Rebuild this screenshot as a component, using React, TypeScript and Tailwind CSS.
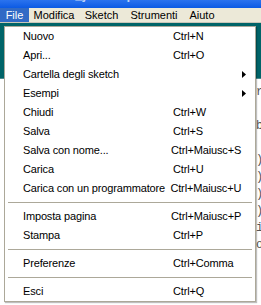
import React from 'react';

type Item =
  | { kind: 'item'; label: string; shortcut?: string; submenu?: boolean }
  | { kind: 'sep' };

const items: Item[] = [
  { kind: 'item', label: 'Nuovo', shortcut: 'Ctrl+N' },
  { kind: 'item', label: 'Apri...', shortcut: 'Ctrl+O' },
  { kind: 'item', label: 'Cartella degli sketch', submenu: true },
  { kind: 'item', label: 'Esempi', submenu: true },
  { kind: 'item', label: 'Chiudi', shortcut: 'Ctrl+W' },
  { kind: 'item', label: 'Salva', shortcut: 'Ctrl+S' },
  { kind: 'item', label: 'Salva con nome...', shortcut: 'Ctrl+Maiusc+S' },
  { kind: 'item', label: 'Carica', shortcut: 'Ctrl+U' },
  { kind: 'item', label: 'Carica con un programmatore', shortcut: 'Ctrl+Maiusc+U' },
  { kind: 'sep' },
  { kind: 'item', label: 'Imposta pagina', shortcut: 'Ctrl+Maiusc+P' },
  { kind: 'item', label: 'Stampa', shortcut: 'Ctrl+P' },
  { kind: 'sep' },
  { kind: 'item', label: 'Preferenze', shortcut: 'Ctrl+Comma' },
  { kind: 'sep' },
  { kind: 'item', label: 'Esci', shortcut: 'Ctrl+Q' },
];

const menus = [
  { label: 'File', w: 'w-[29px]', active: true },
  { label: 'Modifica', w: 'w-[50px]' },
  { label: 'Sketch', w: 'w-[45px]' },
  { label: 'Strumenti', w: 'w-[60px]' },
  { label: 'Aiuto', w: 'w-[36px]' },
];

const code = [
  '// LiquidCrystal Library - Hello World',
  ' The circuit:',
  ' * LCD RS pin to digital pin 12 enable',
  ' * LCD Enable pin to digital pin 11 data',
  ' * LCD D4 pin to digital pin 5 (LCD)',
  ' * LCD D5 pin to digital pin 4 (LCD)',
  ' * LCD D6 pin to digital pin 3 (LCD)',
  ' * LCD D7 pin to digital pin 2 (LCD)',
  ' * LCD R/W pin to ground and then pin',
  ' * 10K resistor: ends to +5V and ground',
  ' * wiper to LCD VO pin (pin 3) Data',
  ' */',
  '  Pin Digital 11 -> Pin 06 data LCD',
];

function Arrow() {
  return (
    <svg width="4" height="7" viewBox="0 0 4 7" className="block">
      <polygon points="0,0 4,3.5 0,7" fill="#000" />
    </svg>
  );
}

export default function App() {
  return (
    <div
      className="relative w-[261px] h-[305px] overflow-hidden bg-white text-[11px] text-black"
      style={{ fontFamily: '"Liberation Sans", Arial, sans-serif' }}
    >
      {/* title bar */}
      <div className="h-[8px] bg-gradient-to-b from-[#2a73ee] to-[#0a5ae4] overflow-hidden">
        <div className="-mt-[13px] pl-[34px] text-[13px] font-bold leading-[16px] text-white/70">
          sketch_jan19a | Arduino 1.0.3
        </div>
      </div>

      <div className="flex h-[297px]">
        <div className="w-[4px] bg-[#0b55dc]" />
        <div className="flex-1 flex flex-col">
          {/* menu bar */}
          <div className="h-[18px] bg-[#ece9d8] border-b border-[#c9c6b8] flex items-stretch">
            {menus.map((m) => (
              <div
                key={m.label}
                className={`${m.w} flex items-center justify-center leading-none ${
                  m.active ? 'bg-[#316ac5] text-white' : ''
                }`}
              >
                {m.label}
              </div>
            ))}
          </div>
          {/* toolbar */}
          <div className="h-[65px] bg-[#006468] border-b border-[#4a8a8c]" />
          {/* editor */}
          <div
            className="flex-1 pt-[5px] pl-[4px] text-[12px] leading-[17px] text-[#555] whitespace-pre"
            style={{ fontFamily: '"Liberation Mono", "Courier New", monospace' }}
          >
            {code.map((l, i) => (
              <div key={i}>{l}</div>
            ))}
          </div>
        </div>
      </div>

      {/* File dropdown menu */}
      <div className="absolute left-[4px] top-[26px] w-[252px] bg-white border border-[#aca899] shadow-[1px_1px_1px_rgba(0,0,0,0.25)] tracking-[-0.15px]">
        {items.map((it, i) =>
          it.kind === 'sep' ? (
            <div key={i} className="h-[9px] flex items-start pt-[4px] px-[3px]">
              <div className="h-px w-full bg-[#aca899]" />
            </div>
          ) : (
            <div key={i} className="h-[19px] flex items-center pl-[18px] leading-none whitespace-nowrap">
              <div className="w-[150px]">{it.label}</div>
              <div className="flex-1">{it.shortcut}</div>
              <div className="w-[14px] flex justify-start pl-[1px]">{it.submenu ? <Arrow /> : null}</div>
            </div>
          )
        )}
      </div>
    </div>
  );
}
